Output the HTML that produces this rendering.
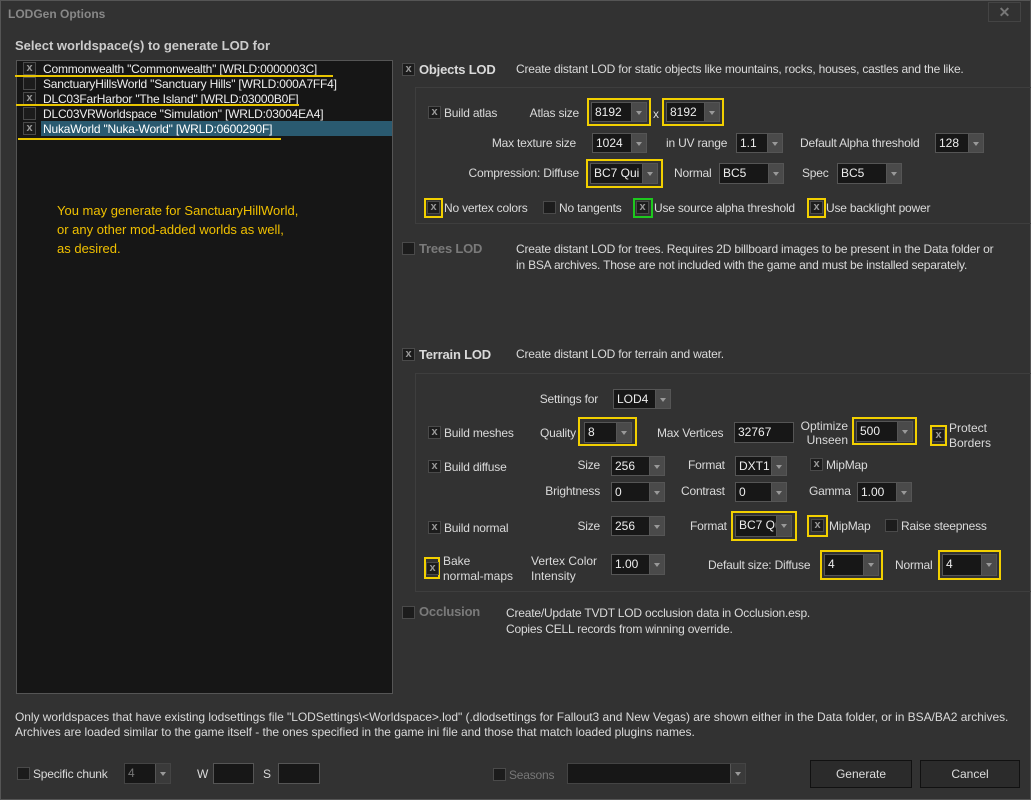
<!DOCTYPE html>
<html><head><meta charset="utf-8"><style>
*{box-sizing:border-box;margin:0;padding:0}
body{width:1031px;height:800px;background:#323232;font-family:"Liberation Sans",sans-serif;font-size:12px;color:#dadada;position:relative;overflow:hidden;border:1px solid #555}
.a{position:absolute;white-space:nowrap}
.t{position:absolute;white-space:nowrap;line-height:14px;transform:translateY(-7px);font-size:12px;letter-spacing:-0.2px}
.r{text-align:right}
.b{font-weight:bold;font-size:13px}
.cb{position:absolute;width:13px;height:13px;background:#1c1c1c;border:1px solid #4a4a4a;color:#9a9a9a;font-size:11px;line-height:11px;text-align:center;font-weight:bold}
.dd{position:absolute;background:#171717;border:1px solid #555;color:#eee;font-size:12px;padding:1px 3px;line-height:16px;overflow:hidden}
.dd i{position:absolute;right:0;top:0;bottom:0;width:15px;background:#4a4a4a;border-left:1px solid #555}
.dd i:after{content:"";position:absolute;left:4px;top:8px;border:3px solid transparent;border-top:4px solid #999}
.y{position:absolute;border:2px solid #f2d000}
.ul{position:absolute;height:2px;background:#e8c400}
.grp{position:absolute;border:1px solid #3e3e3e}
.btn{position:absolute;background:#2b2b2b;border:1px solid #111;color:#ddd;text-align:center;line-height:26px;font-size:12px}
.fld{position:absolute;background:#171717;border:1px solid #555}
</style></head><body>
<div class="a b" style="left:7px;top:6px;color:#888;font-size:12px">LODGen Options</div>
<div class="a" style="left:987px;top:1px;width:33px;height:20px;border:1px solid #444;color:#777;text-align:center;font-size:14px;line-height:18px;font-weight:bold">✕</div>

<div class="a b" style="left:14px;top:37px;color:#ccc">Select worldspace(s) to generate LOD for</div>
<div class="a" style="left:15px;top:59px;width:377px;height:634px;background:#161616;border:1px solid #555"></div>
<div class="a" style="left:40px;top:120px;width:351px;height:15px;background:#2a5a70"></div>
<div class="cb" style="left:22px;top:61px">x</div><div class="t" style="left:42px;top:68px;color:#eee">Commonwealth "Commonwealth" [WRLD:0000003C]</div>
<div class="cb" style="left:22px;top:76px"></div><div class="t" style="left:42px;top:83px;color:#eee">SanctuaryHillsWorld "Sanctuary Hills" [WRLD:000A7FF4]</div>
<div class="cb" style="left:22px;top:91px">x</div><div class="t" style="left:42px;top:98px;color:#eee">DLC03FarHarbor "The Island" [WRLD:03000B0F]</div>
<div class="cb" style="left:22px;top:106px"></div><div class="t" style="left:42px;top:113px;color:#eee">DLC03VRWorldspace "Simulation" [WRLD:03004EA4]</div>
<div class="cb" style="left:22px;top:121px">x</div><div class="t" style="left:42px;top:128px;color:#fff">NukaWorld "Nuka-World" [WRLD:0600290F]</div>
<div class="ul" style="left:14px;top:74px;width:318px"></div>
<div class="ul" style="left:15px;top:103px;width:283px"></div>
<div class="ul" style="left:17px;top:137px;width:263px"></div>
<div class="a" style="left:56px;top:200px;color:#f0c000;font-size:13px;line-height:19px">You may generate for SanctuaryHillWorld,<br>or any other mod-added worlds as well,<br>as desired.</div>

<!-- Objects -->
<div class="cb" style="left:401px;top:62px">x</div>
<div class="t b" style="left:418px;top:69px">Objects LOD</div>
<div class="t" style="left:515px;top:68px">Create distant LOD for static objects like mountains, rocks, houses, castles and the like.</div>
<div class="grp" style="left:414px;top:86px;width:630px;height:137px"></div>
<div class="cb" style="left:427px;top:105px">x</div><div class="t" style="left:443px;top:112px">Build atlas</div>
<div class="t r" style="right:451px;top:112px">Atlas size</div>
<div class="y" style="left:586px;top:97px;width:64px;height:28px"></div><div class="dd" style="left:590px;top:101px;width:56px;height:20px">8192<i></i></div>
<div class="t" style="left:652px;top:113px">x</div>
<div class="y" style="left:661px;top:97px;width:62px;height:28px"></div><div class="dd" style="left:665px;top:101px;width:54px;height:20px">8192<i></i></div>
<div class="t r" style="right:454px;top:142px">Max texture size</div>
<div class="dd" style="left:591px;top:132px;width:55px;height:20px">1024<i></i></div>
<div class="t" style="left:665px;top:142px">in UV range</div>
<div class="dd" style="left:735px;top:132px;width:47px;height:20px">1.1<i></i></div>
<div class="t" style="left:799px;top:142px">Default Alpha threshold</div>
<div class="dd" style="left:934px;top:132px;width:49px;height:20px">128<i></i></div>
<div class="t r" style="right:451px;top:172px">Compression: Diffuse</div>
<div class="y" style="left:585px;top:158px;width:77px;height:29px"></div><div class="dd" style="left:589px;top:162px;width:68px;height:21px">BC7 Qui<i></i></div>
<div class="t" style="left:673px;top:172px">Normal</div>
<div class="dd" style="left:718px;top:162px;width:65px;height:21px">BC5<i></i></div>
<div class="t" style="left:801px;top:172px">Spec</div>
<div class="dd" style="left:836px;top:162px;width:65px;height:21px">BC5<i></i></div>
<div class="y" style="left:423px;top:197px;width:19px;height:20px"></div><div class="cb" style="left:426px;top:200px">x</div>
<div class="t" style="left:443px;top:207px">No vertex colors</div>
<div class="cb" style="left:542px;top:200px"></div><div class="t" style="left:558px;top:207px">No tangents</div>
<div class="a" style="left:632px;top:197px;width:20px;height:20px;border:2px solid #1ec81e"></div><div class="cb" style="left:635px;top:200px">x</div>
<div class="t" style="left:653px;top:207px">Use source alpha threshold</div>
<div class="y" style="left:806px;top:197px;width:19px;height:20px"></div><div class="cb" style="left:809px;top:200px">x</div>
<div class="t" style="left:825px;top:207px">Use backlight power</div>

<!-- Trees -->
<div class="cb" style="left:401px;top:241px"></div>
<div class="t b" style="left:418px;top:248px;color:#7a7a7a">Trees LOD</div>
<div class="a" style="left:515px;top:240px;line-height:16px;letter-spacing:-0.2px">Create distant LOD for trees. Requires 2D billboard images to be present in the Data folder or<br>in BSA archives. Those are not included with the game and must be installed separately.</div>

<!-- Terrain -->
<div class="cb" style="left:401px;top:347px">x</div>
<div class="t b" style="left:418px;top:354px">Terrain LOD</div>
<div class="t" style="left:515px;top:353px">Create distant LOD for terrain and water.</div>
<div class="grp" style="left:414px;top:372px;width:630px;height:219px"></div>
<div class="t r" style="right:432px;top:398px">Settings for</div>
<div class="dd" style="left:612px;top:388px;width:58px;height:20px">LOD4<i></i></div>
<div class="cb" style="left:427px;top:425px">x</div><div class="t" style="left:443px;top:432px">Build meshes</div>
<div class="t" style="left:539px;top:432px">Quality</div>
<div class="y" style="left:577px;top:416px;width:59px;height:29px"></div><div class="dd" style="left:583px;top:421px;width:48px;height:21px">8<i></i></div>
<div class="t" style="left:656px;top:432px">Max Vertices</div>
<div class="fld" style="left:733px;top:421px;width:60px;height:21px;color:#eee;padding:2px 3px">32767</div>
<div class="a r" style="left:790px;top:418px;width:57px;line-height:14px">Optimize<br>Unseen</div>
<div class="y" style="left:851px;top:416px;width:65px;height:28px"></div><div class="dd" style="left:855px;top:420px;width:57px;height:21px">500<i></i></div>
<div class="y" style="left:929px;top:424px;width:17px;height:21px"></div><div class="cb" style="left:931px;top:428px">x</div>
<div class="a" style="left:948px;top:420px;line-height:15px">Protect<br>Borders</div>
<div class="cb" style="left:427px;top:459px">x</div><div class="t" style="left:443px;top:466px">Build diffuse</div>
<div class="t r" style="right:430px;top:464px">Size</div>
<div class="dd" style="left:610px;top:455px;width:54px;height:20px">256<i></i></div>
<div class="t" style="left:687px;top:464px">Format</div>
<div class="dd" style="left:734px;top:455px;width:52px;height:20px">DXT1<i></i></div>
<div class="cb" style="left:809px;top:457px">x</div><div class="t" style="left:825px;top:464px">MipMap</div>
<div class="t r" style="right:430px;top:490px">Brightness</div>
<div class="dd" style="left:610px;top:481px;width:54px;height:20px">0<i></i></div>
<div class="t" style="left:680px;top:490px">Contrast</div>
<div class="dd" style="left:734px;top:481px;width:52px;height:20px">0<i></i></div>
<div class="t" style="left:808px;top:490px">Gamma</div>
<div class="dd" style="left:856px;top:481px;width:55px;height:20px">1.00<i></i></div>
<div class="cb" style="left:427px;top:520px">x</div><div class="t" style="left:443px;top:527px">Build normal</div>
<div class="t r" style="right:430px;top:525px">Size</div>
<div class="dd" style="left:610px;top:515px;width:54px;height:20px">256<i></i></div>
<div class="t" style="left:689px;top:525px">Format</div>
<div class="y" style="left:730px;top:510px;width:66px;height:30px"></div><div class="dd" style="left:734px;top:514px;width:57px;height:22px">BC7 Qu<i></i></div>
<div class="y" style="left:806px;top:514px;width:21px;height:22px"></div><div class="cb" style="left:810px;top:518px">x</div>
<div class="t" style="left:828px;top:525px">MipMap</div>
<div class="cb" style="left:884px;top:518px"></div><div class="t" style="left:900px;top:525px">Raise steepness</div>
<div class="y" style="left:423px;top:556px;width:16px;height:22px"></div><div class="cb" style="left:425px;top:561px">x</div>
<div class="a" style="left:442px;top:553px;line-height:15px">Bake<br>normal-maps</div>
<div class="a" style="left:530px;top:553px;line-height:15px">Vertex Color<br>Intensity</div>
<div class="dd" style="left:610px;top:553px;width:54px;height:21px">1.00<i></i></div>
<div class="t" style="left:707px;top:564px">Default size: Diffuse</div>
<div class="y" style="left:819px;top:549px;width:63px;height:30px"></div><div class="dd" style="left:823px;top:553px;width:55px;height:22px">4<i></i></div>
<div class="t" style="left:894px;top:564px">Normal</div>
<div class="y" style="left:937px;top:549px;width:63px;height:30px"></div><div class="dd" style="left:941px;top:553px;width:55px;height:22px">4<i></i></div>

<!-- Occlusion -->
<div class="cb" style="left:401px;top:605px"></div>
<div class="t b" style="left:418px;top:611px;color:#7a7a7a">Occlusion</div>
<div class="a" style="left:505px;top:604px;line-height:16px;letter-spacing:-0.2px">Create/Update TVDT LOD occlusion data in Occlusion.esp.<br>Copies CELL records from winning override.</div>

<div class="a" style="left:14px;top:709px;line-height:15px;font-size:12px;letter-spacing:-0.04px">Only worldspaces that have existing lodsettings file "LODSettings\&lt;Worldspace&gt;.lod" (.dlodsettings for Fallout3 and New Vegas) are shown either in the Data folder, or in BSA/BA2 archives.<br>Archives are loaded similar to the game itself - the ones specified in the game ini file and those that match loaded plugins names.</div>

<div class="cb" style="left:16px;top:766px"></div><div class="t" style="left:32px;top:773px">Specific chunk</div>
<div class="dd" style="left:123px;top:762px;width:47px;height:21px;color:#777;border-color:#444">4<i style="background:#3a3a3a"></i></div>
<div class="t" style="left:196px;top:773px">W</div><div class="fld" style="left:212px;top:762px;width:41px;height:21px"></div>
<div class="t" style="left:262px;top:773px">S</div><div class="fld" style="left:277px;top:762px;width:42px;height:21px"></div>
<div class="cb" style="left:492px;top:767px"></div><div class="t" style="left:508px;top:774px;color:#777">Seasons</div>
<div class="dd" style="left:566px;top:762px;width:179px;height:21px;border-color:#444"><i style="background:#3a3a3a"></i></div>
<div class="btn" style="left:809px;top:759px;width:102px;height:28px">Generate</div>
<div class="btn" style="left:919px;top:759px;width:100px;height:28px">Cancel</div>
</body></html>
